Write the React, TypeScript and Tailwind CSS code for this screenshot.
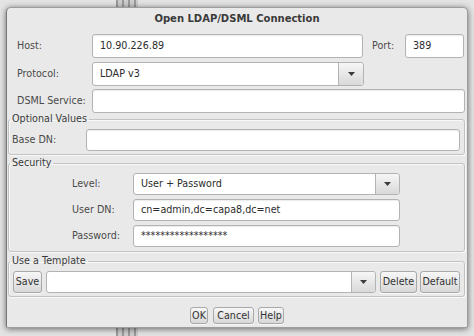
import React from "react";

const font = { fontFamily: '"DejaVu Sans", Verdana, sans-serif' };

function Input({ w, value }: { w: string; value?: string }) {
  return (
    <div
      className={`${w} h-full flex items-center pl-[7px] bg-white border border-[#b3b3b3] rounded-[3px] shadow-[inset_0_1px_1px_rgba(0,0,0,0.08)] text-[#2b2b2b] whitespace-nowrap overflow-hidden`}
    >
      {value}
    </div>
  );
}

function Arrow() {
  return (
    <div className="w-full h-full flex items-center justify-center border-l border-[#b3b3b3] bg-gradient-to-b from-[#f6f6f6] to-[#d9d9d9] rounded-r-[3px]">
      <svg width="7" height="4" viewBox="0 0 7 4">
        <path d="M0 0h7L3.5 4z" fill="#3c3c3c" />
      </svg>
    </div>
  );
}

function Select({ w, value, arrowW = "w-[24px]" }: { w: string; value?: string; arrowW?: string }) {
  return (
    <div className={`${w} h-full flex bg-white border border-[#b3b3b3] rounded-[3px] text-[#2b2b2b]`}>
      <div className="flex-1 flex items-center pl-[7px] whitespace-nowrap">{value}</div>
      <div className={arrowW}>
        <Arrow />
      </div>
    </div>
  );
}

function Button({ w, label }: { w: string; label: string }) {
  return (
    <div
      className={`${w} h-full flex items-center justify-center border border-[#a9a9a9] rounded-[3px] bg-gradient-to-b from-[#f7f7f7] to-[#d8d8d8] text-[#333] shadow-[0_1px_0_rgba(255,255,255,0.7)]`}
    >
      {label}
    </div>
  );
}

function Group({ title, mt, children }: { title: string; mt: string; children: React.ReactNode }) {
  return (
    <fieldset
      className={`${mt} ml-[1px] w-[457px] border border-[#c2c2c2] rounded-[3px] shadow-[inset_1px_1px_0_#f8f8f8,1px_1px_0_#f8f8f8]`}
    >
      <legend className="ml-[1px] px-[2px] leading-[12px] text-[#3a3a3a]">{title}</legend>
      {children}
    </fieldset>
  );
}

export default function App() {
  return (
    <div
      className="relative w-[474px] h-[336px] overflow-hidden bg-[#e4e4e4] pt-[7px] pl-[6px] text-[9.6px] leading-none text-[#4a4a4a]"
      style={font}
    >
      {/* desktop strip behind the dialog */}
      <div className="absolute left-[116px] top-0 w-[22px] h-full bg-[repeating-linear-gradient(90deg,#9a9a9a_0,#9a9a9a_2px,#cdcdcd_2px,#cdcdcd_6px)]" />

      <div className="relative w-[462px] h-[321px] bg-[#e9e9e9] border border-[#9d9d9d] border-l-[#777] rounded-t-[5px] rounded-b-[2px] shadow-[0_1px_6px_rgba(0,0,0,0.55)]">
        <div className="h-[22px] flex items-center justify-center font-bold text-[10px] text-[#3a3a3a]">
          Open LDAP/DSML Connection
        </div>

        <div className="mt-[4px] h-[24px] flex items-center pl-[10px]">
          <span className="w-[75px]">Host:</span>
          <Input w="w-[271px]" value="10.90.226.89" />
          <span className="ml-[9px] w-[33px]">Port:</span>
          <Input w="w-[59px]" value="389" />
        </div>

        <div className="mt-[4px] h-[24px] flex items-center pl-[10px]">
          <span className="w-[75px]">Protocol:</span>
          <Select w="w-[272px]" value="LDAP v3" arrowW="w-[25px]" />
        </div>

        <div className="mt-[3px] h-[24px] flex items-center pl-[10px]">
          <span className="w-[75px]">DSML Service:</span>
          <Input w="w-[373px]" />
        </div>

        <Group title="Optional Values" mt="mt-0">
          <div className="mt-[4px] mb-[3px] h-[22px] flex items-center pl-[3px]">
            <span className="w-[74px]">Base DN:</span>
            <Input w="w-[374px]" />
          </div>
        </Group>

        <Group title="Security" mt="mt-[2px]">
          <div className="mt-[4px] h-[22px] flex items-center pl-[63px]">
            <span className="w-[61px]">Level:</span>
            <Select w="w-[267px]" value="User + Password" />
          </div>
          <div className="mt-[4px] h-[22px] flex items-center pl-[63px]">
            <span className="w-[61px]">User DN:</span>
            <Input w="w-[267px]" value="cn=admin,dc=capa8,dc=net" />
          </div>
          <div className="mt-[4px] mb-[4px] h-[22px] flex items-center pl-[63px]">
            <span className="w-[61px]">Password:</span>
            <Input w="w-[267px]" value="******************" />
          </div>
        </Group>

        <Group title="Use a Template" mt="mt-[3px]">
          <div className="mt-[4px] mb-[3px] h-[22px] flex items-center pl-[4px] gap-[4px]">
            <Button w="w-[29px]" label="Save" />
            <Select w="w-[330px]" />
            <Button w="w-[37px]" label="Delete" />
            <div className="w-[40px] h-full -ml-[1px]">
              <Button w="w-[40px]" label="Default" />
            </div>
          </div>
        </Group>

        <div className="mt-[10px] h-[17px] flex justify-center gap-[4px]">
          <div className="h-full mr-[1px]">
            <Button w="w-[18px]" label="OK" />
          </div>
          <Button w="w-[41px]" label="Cancel" />
          <Button w="w-[26px]" label="Help" />
        </div>
      </div>
    </div>
  );
}
